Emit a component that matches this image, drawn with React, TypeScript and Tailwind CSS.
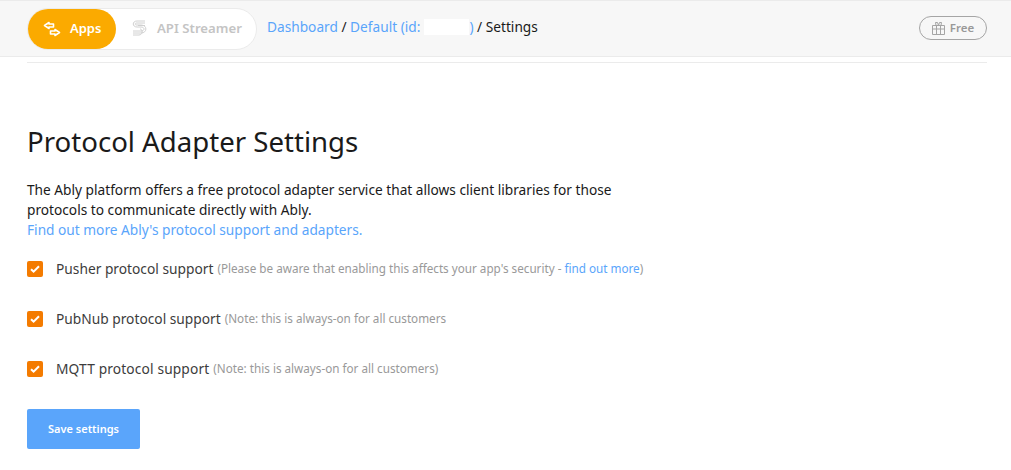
const font = "font-['Noto_Sans',sans-serif]";

const CheckRow = ({ label, note, labelClass = '' }: { label: string; note: React.ReactNode; labelClass?: string }) => (
  <div className="flex items-center h-[18px] mb-8">
    <span className="w-4 h-4 rounded-[2px] bg-[#f47b00] flex items-center justify-center shrink-0">
      <svg width="10" height="8" viewBox="0 0 10 8" fill="none">
        <path d="M1 4.2 3.6 6.6 9 1.2" stroke="#fff" strokeWidth="2" />
      </svg>
    </span>
    <span className={`ml-[13px] text-[13.75px] text-[#3c3c3c] ${labelClass}`}>{label}</span>
    <span className="ml-[4px] text-[11.7px] text-[#999]">{note}</span>
  </div>
);

export default function App() {
  return (
    <div className={`${font} bg-white min-h-[470px] text-[#1a1a1a]`}>
      <div className="h-[57px] bg-[#f7f7f7] border-t border-b border-[#ebebeb] pl-[27px] pr-[24px] flex items-center">
        <div className="flex items-center h-[42px] mt-[1px] w-[230px] rounded-full bg-white border border-[#ebebeb]">
          <div className="h-10 w-[88px] rounded-full bg-[#fbaa00] flex items-center text-white text-[13px] font-semibold pl-[15px] gap-[9px]">
            <svg width="18" height="16" viewBox="0 0 18 16" fill="none" stroke="#fff" strokeWidth="1.6" strokeLinejoin="round">
              <path d="M6 1.500 1.500 4.500 6 7.500V6h4.500V3H6z" />
              <path d="M12 8.500l4.500 3-4.500 3V13H7.500v-3H12z" />
            </svg>
            Apps
          </div>
          <div className="flex items-center text-[#c4c4c4] text-[13.2px] font-semibold ml-[15px] gap-[10px]">
            <svg width="16" height="18" viewBox="0 0 16 18" fill="none" stroke="#d0d0d0" strokeWidth="1">
              <path d="M14 1H6C1 1 1 7 6 7h4c4 0 4 4 0 4H2" />
              <path d="M14 3H6C3.500 3 3.500 5 6 5h4c6.500 0 6.500 8 0 8H2" />
              <path d="M14 5.500H7M9 9c3 0 3 6-1 6H2" />
            </svg>
            API Streamer
          </div>
        </div>
        <div className="ml-[10px] text-[13.7px] mt-[-2px] flex items-center whitespace-pre">
          <a className="text-[#5aa5fb]">Dashboard</a>
          <span> / </span>
          <a className="text-[#5aa5fb]">Default (id:</a>
          <span className="w-[45px] h-4 bg-white ml-1" />
          <a className="text-[#5aa5fb]">)</a>
          <span> / Settings</span>
        </div>
        <div className="ml-auto mt-[-1px] h-6 w-[68px] rounded-full border border-[#a5a5a5] flex items-center justify-center gap-[5px] text-[#999] text-[11.5px] font-semibold">
          <svg width="13" height="13" viewBox="0 0 13 13" fill="none" stroke="#a5a5a5">
            <path d="M.5 3.500h12v9H.5zM.5 7h12M4.500 3.500v9M8.500 3.500v9M4 3.500 3.500.5h2l1 3 1-3h2L9 3.500" />
          </svg>
          Free
        </div>
      </div>
      <div className="ml-[27px] mr-[24px] h-[6px] border-b border-[#ebebeb]" />
      <div className="px-[27px]">
        <h1 className="mt-[60px] text-[27.6px] leading-9 text-[#1a1a1a]">Protocol Adapter Settings</h1>
        <p className="mt-[21px] w-[620px] text-[13.7px] leading-5">
          The Ably platform offers a free protocol adapter service that allows client libraries for those protocols to communicate directly with Ably.
          <br />
          <a className="text-[#5aa5fb]">Find out more Ably's protocol support and adapters.</a>
        </p>
        <div className="mt-[20px]">
          <CheckRow
            label="Pusher protocol support"
            note={<>(Please be aware that enabling this affects your app's security - <a className="text-[#5aa5fb]">find out more</a>)</>}
          />
          <CheckRow label="PubNub protocol support" note="(Note: this is always-on for all customers" />
          <CheckRow label="MQTT protocol support" note="(Note: this is always-on for all customers)" labelClass="tracking-[0.14px]" />
        </div>
        <button className="mt-[-1px] w-[113px] h-10 bg-[#5aa5fb] rounded-[2px] text-white text-[11px] font-semibold">
          Save settings
        </button>
      </div>
    </div>
  );
}
